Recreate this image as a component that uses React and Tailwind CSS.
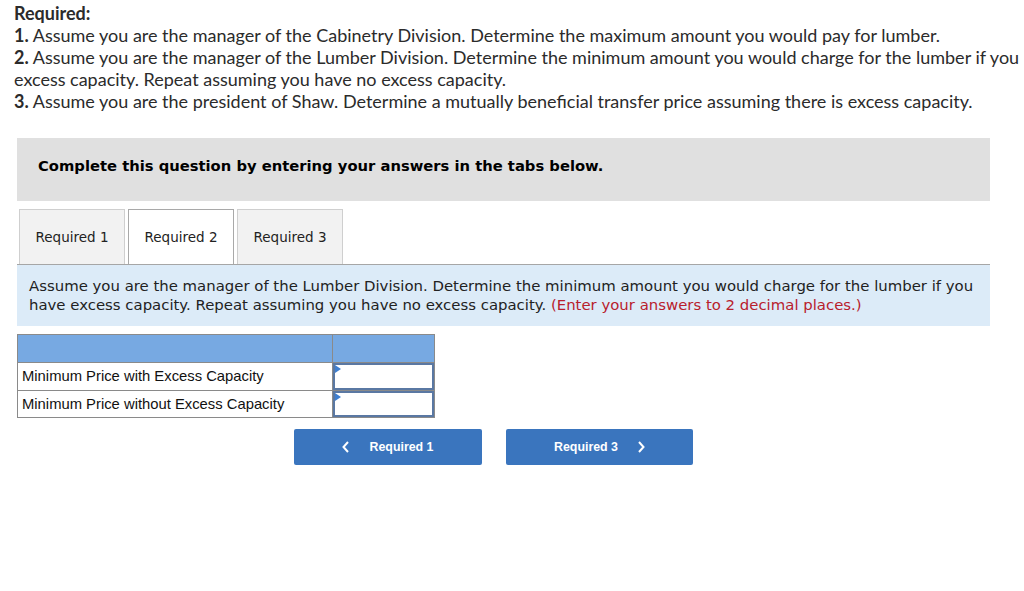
import React from 'react';

const tabs = ['Required 1', 'Required 2', 'Required 3'];

function InputCell({ h }) {
  return (
    <div className={'w-[102px] border-l border-[#8a8a8a] p-0 ' + h}>
      <div className="relative h-full border-2 border-[#5a78a3] bg-white">
        <span className="absolute left-0 top-0 w-0 h-0 border-t-[4px] border-b-[4px] border-l-[6px] border-t-transparent border-b-transparent border-l-[#3f7fd0]" />
      </div>
    </div>
  );
}

export default function App() {
  return (
    <div className="w-[1024px] h-[591px] overflow-hidden bg-white">
      <div className="pl-[14px] pt-[2px] text-[18px] leading-[22px] text-[#2b2b2b] whitespace-nowrap" style={{ fontFamily: 'Lato, "Open Sans", sans-serif' }}>
        <div className="font-bold">Required:</div>
        <div><b>1.</b> Assume you are the manager of the Cabinetry Division. Determine the maximum amount you would pay for lumber.</div>
        <div><b>2.</b> Assume you are the manager of the Lumber Division. Determine the minimum amount you would charge for the lumber if you have</div>
        <div>excess capacity. Repeat assuming you have no excess capacity.</div>
        <div><b>3.</b> Assume you are the president of Shaw. Determine a mutually beneficial transfer price assuming there is excess capacity.</div>
      </div>

      <div className="ml-[17px] w-[973px]" style={{ fontFamily: '"DejaVu Sans", Verdana, sans-serif' }}>
        <div className="mt-[26px] h-[63px] bg-[#e0e0e0] pl-[21px] pt-[17px] text-[14.75px] font-bold text-black">
          Complete this question by entering your answers in the tabs below.
        </div>

        <div className="mt-[8px] flex gap-[3px] pl-[2px]">
          {tabs.map((t, i) => (
            <div
              key={t}
              className={
                'h-[55px] w-[106px] flex items-center justify-center text-[13.5px] text-[#222] border border-b-0 ' +
                (i === 1 ? 'bg-white border-[#a9a9a9] mb-[-1px] relative z-10' : 'bg-[#f2f2f2] border-[#cfcfcf]')
              }
            >
              {t}
            </div>
          ))}
        </div>

        <div className="border-t border-[#a6a6a6] bg-[#dcebf8] h-[62px] pl-[12px] pt-[12px] text-[14.9px] leading-[19px] text-[#222] whitespace-nowrap">
          Assume you are the manager of the Lumber Division. Determine the minimum amount you would charge for the lumber if you
          <br />
          have excess capacity. Repeat assuming you have no excess capacity.{' '}
          <span className="text-[#b8202c]">(Enter your answers to 2 decimal places.)</span>
        </div>

        <div className="mt-[8px] w-[418px] border border-[#8a8a8a] text-[14.8px] text-[#111]" style={{ fontFamily: '"Liberation Sans", Arial, sans-serif' }}>
          <div className="flex h-[28px] bg-[#77a9e2] border-b border-[#8a8a8a]">
            <div className="w-[315px]" />
            <div className="w-[102px] border-l border-[#8a8a8a]" />
          </div>
          <div className="flex h-[28px] border-b border-[#8a8a8a]">
            <div className="w-[315px] pl-[4px] flex items-center">Minimum Price with Excess Capacity</div>
            <InputCell h="h-[27px]" />
          </div>
          <div className="flex h-[26px]">
            <div className="w-[315px] pl-[4px] flex items-center">Minimum Price without Excess Capacity</div>
            <InputCell h="h-[26px]" />
          </div>
        </div>
      </div>

      <div className="mt-[11px] pl-[294px] flex gap-[24px]" style={{ fontFamily: '"Liberation Sans", Arial, sans-serif' }}>
        <button className="w-[188px] h-[36px] bg-[#3a75be] rounded-[2px] text-white text-[12.4px] font-bold flex items-center justify-center gap-[19px]">
          <svg width="8" height="12" viewBox="0 0 8 12" fill="none" stroke="white" strokeWidth="2"><path d="M6 1 L1.5 6 L6 11" /></svg>
          <span>Required 1</span>
        </button>
        <button className="w-[187px] h-[36px] bg-[#3a75be] rounded-[2px] text-white text-[12.4px] font-bold flex items-center justify-center gap-[19px]">
          <span>Required 3</span>
          <svg width="8" height="12" viewBox="0 0 8 12" fill="none" stroke="white" strokeWidth="2"><path d="M2 1 L6.5 6 L2 11" /></svg>
        </button>
      </div>
    </div>
  );
}
